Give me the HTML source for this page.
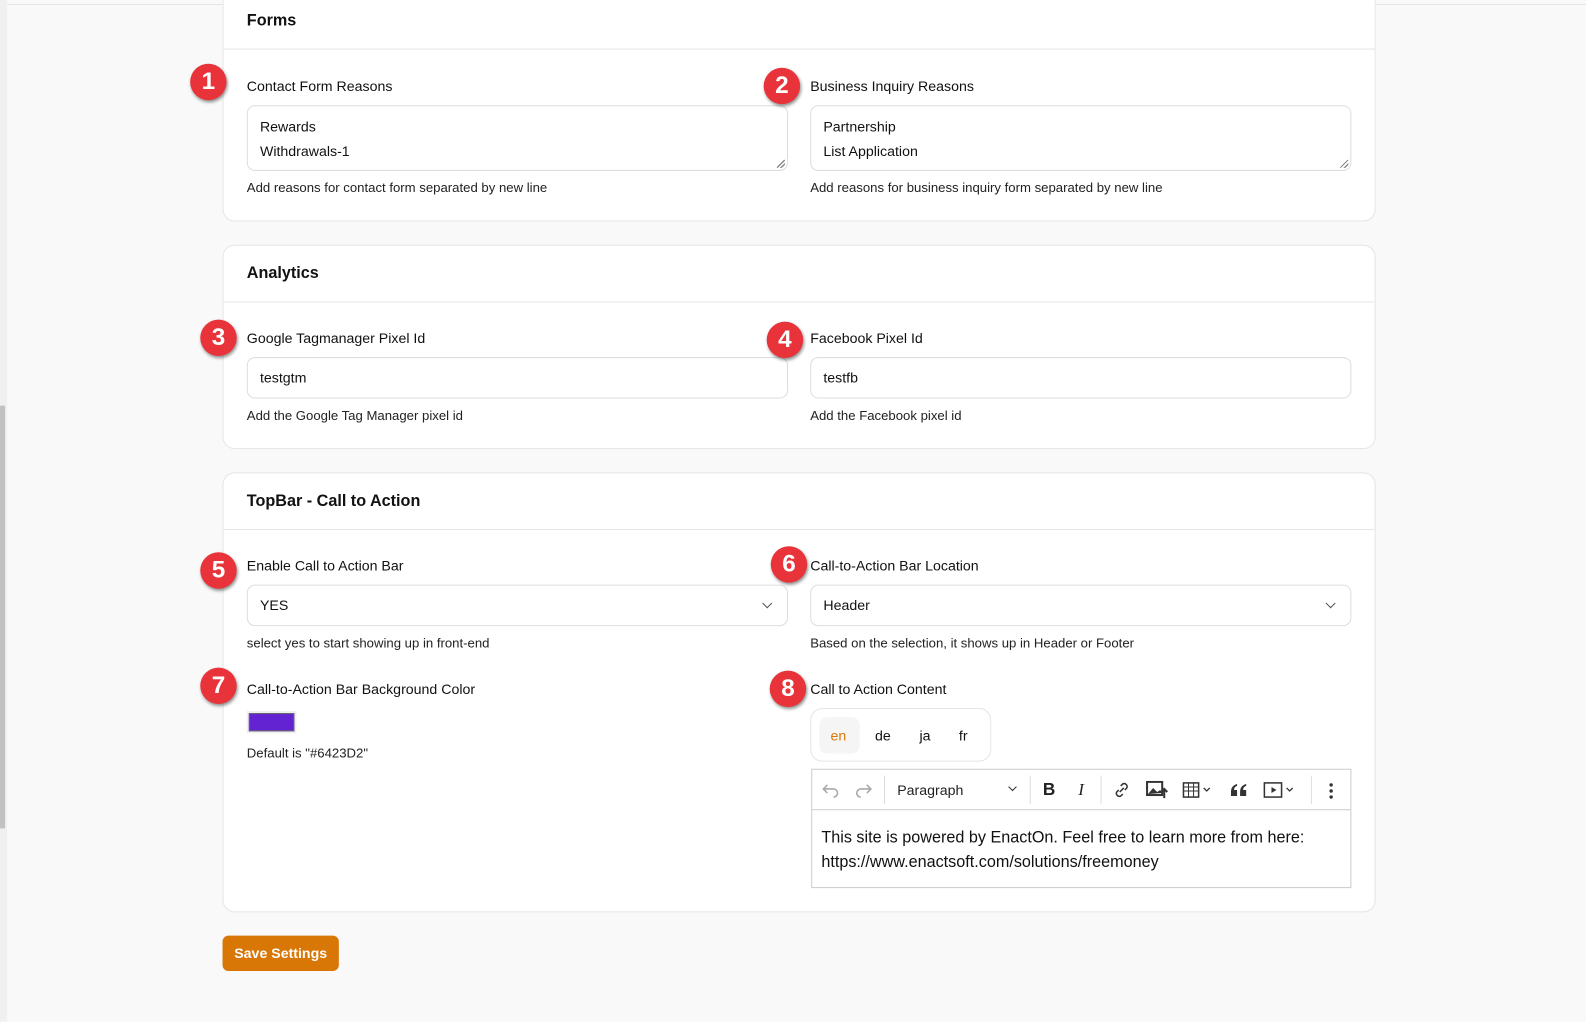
<!DOCTYPE html>
<html><head><meta charset="utf-8"><style>
*{box-sizing:border-box;margin:0;padding:0}
body{width:1586px;height:1020px;background:#f9f9f9;font-family:"Liberation Sans",sans-serif;color:#111;position:relative;overflow:hidden}
#w{position:absolute;left:0;top:0;width:1568px;height:1008px;transform:scale(1.0115);transform-origin:0 0}
.abs{position:absolute}
.sb{left:0;top:0;width:7px;height:1010px;background:#f0f0f0}
.thumb{left:0;top:401px;width:5px;height:418px;background:#c1c1c1}
.card{position:absolute;left:220px;width:1140px;background:#fff;border:1px solid #e5e5e5;border-radius:12px}
.card h2{position:absolute;left:23px;font-size:16px;font-weight:bold;color:#111}
.div{position:absolute;left:0;right:0;height:1px;background:#e5e5e5}
.lbl{position:absolute;font-size:14px;color:#111}
.help{position:absolute;font-size:13px;color:#222}
.box{position:absolute;border:1px solid #ddd;border-radius:8px;background:#fff;font-size:14px;color:#111;padding-left:12px}
.badge{position:absolute;width:36px;height:36px;border-radius:50%;background:#e8333a;color:#fff;font-weight:bold;font-size:24px;text-align:center;line-height:36px;box-shadow:1px 2px 3px rgba(0,0,0,.45)}
.chev{position:absolute;right:16px;top:14px;width:7px;height:7px;border-right:1.6px solid #555;border-bottom:1.6px solid #555;transform:rotate(45deg)}
.rs{position:absolute;right:2px;bottom:2px;width:8px;height:8px;background:linear-gradient(135deg,transparent 45%,#888 45%,#888 55%,transparent 55%,transparent 70%,#888 70%,#888 80%,transparent 80%)}
</style></head><body><div id="w">
<div class="abs sb"></div><div class="abs thumb"></div>
<div class="abs" style="left:7px;top:4px;width:1579px;height:1px;background:#e5e5e5"></div>

<div class="card" style="top:-10px;height:229px;border-top:none">
<h2 style="top:22px">Forms</h2><div class="div" style="top:58px"></div></div>
<div class="card" style="top:242px;height:202px">
<h2 style="top:19px">Analytics</h2><div class="div" style="top:55px"></div></div>
<div class="card" style="top:467px;height:435px">
<h2 style="top:19px">TopBar - Call to Action</h2><div class="div" style="top:55px"></div></div>

<div class="lbl" style="left:244px;top:77px">Contact Form Reasons</div>
<div class="box" style="left:244px;top:104px;width:535px;height:65px;line-height:24px;padding-top:8px;overflow:hidden">Rewards<br>Withdrawals-1<br>Offer Not Tracked<div class="rs"></div></div>
<div class="help" style="left:244px;top:178px">Add reasons for contact form separated by new line</div>
<div class="lbl" style="left:801px;top:77px">Business Inquiry Reasons</div>
<div class="box" style="left:801px;top:104px;width:535px;height:65px;line-height:24px;padding-top:8px;overflow:hidden">Partnership<br>List Application<br>Other<div class="rs"></div></div>
<div class="help" style="left:801px;top:178px">Add reasons for business inquiry form separated by new line</div>

<div class="lbl" style="left:244px;top:326px">Google Tagmanager Pixel Id</div>
<div class="box" style="left:244px;top:353px;width:535px;height:41px;line-height:39px">testgtm</div>
<div class="help" style="left:244px;top:403px">Add the Google Tag Manager pixel id</div>
<div class="lbl" style="left:801px;top:326px">Facebook Pixel Id</div>
<div class="box" style="left:801px;top:353px;width:535px;height:41px;line-height:39px">testfb</div>
<div class="help" style="left:801px;top:403px">Add the Facebook pixel id</div>

<div class="lbl" style="left:244px;top:551px">Enable Call to Action Bar</div>
<div class="box" style="left:244px;top:578px;width:535px;height:41px;line-height:39px">YES<div class="chev"></div></div>
<div class="help" style="left:244px;top:628px">select yes to start showing up in front-end</div>
<div class="lbl" style="left:801px;top:551px">Call-to-Action Bar Location</div>
<div class="box" style="left:801px;top:578px;width:535px;height:41px;line-height:39px">Header<div class="chev"></div></div>
<div class="help" style="left:801px;top:628px">Based on the selection, it shows up in Header or Footer</div>

<div class="lbl" style="left:244px;top:673px">Call-to-Action Bar Background Color</div>
<div class="abs" style="left:244px;top:703px;width:49px;height:22px;background:#efefef;padding:2px"><div style="width:100%;height:100%;background:#6423D2;border:1px solid #666"></div></div>
<div class="help" style="left:244px;top:737px">Default is "#6423D2"</div>

<div class="lbl" style="left:801px;top:673px">Call to Action Content</div>
<div class="abs" style="left:801px;top:700px;width:179px;height:53px;border:1px solid #e5e5e5;border-radius:12px;font-size:14px">
<div class="abs" style="left:8px;top:8px;width:40px;height:36px;background:#f5f5f5;border-radius:8px"></div>
<span class="abs" style="left:19px;top:18px;color:#d97706">en</span>
<span class="abs" style="left:63px;top:18px">de</span>
<span class="abs" style="left:107px;top:18px">ja</span>
<span class="abs" style="left:146px;top:18px">fr</span></div>

<div class="abs" style="left:802px;top:760px;width:534px;height:118px;border:1px solid #ccc;background:#fff">
<div class="abs" style="left:0;top:0;right:0;height:40px;border-bottom:1px solid #ccc;font-size:14px;color:#222">
<svg class="abs" style="left:9px;top:12px" width="20" height="16"><path d="M6 3L2 7l4 4M2 7h10a4 4 0 010 8" fill="none" stroke="#aaa" stroke-width="1.6"/></svg>
<svg class="abs" style="left:42px;top:12px" width="20" height="16"><path d="M12 3l4 4-4 4M16 7H6a4 4 0 000 8" fill="none" stroke="#aaa" stroke-width="1.6"/></svg>
<div class="abs" style="left:71px;top:6px;width:1px;height:28px;background:#ddd"></div>
<span class="abs" style="left:84px;top:12px">Paragraph</span>
<div class="abs" style="left:195px;top:14px;width:6px;height:6px;border-right:1.5px solid #333;border-bottom:1.5px solid #333;transform:rotate(45deg)"></div>
<div class="abs" style="left:215px;top:6px;width:1px;height:28px;background:#ddd"></div>
<span class="abs" style="left:228px;top:10px;font-weight:bold;font-size:17px">B</span>
<span class="abs" style="left:263px;top:10px;font-style:italic;font-size:17px;font-family:'Liberation Serif',serif">I</span>
<div class="abs" style="left:285px;top:6px;width:1px;height:28px;background:#ddd"></div>
<svg class="abs" style="left:297px;top:11px" width="18" height="18"><path d="M7 11l4-4M8 5l2-2a3 3 0 014 4l-2 2M10 13l-2 2a3 3 0 01-4-4l2-2" fill="none" stroke="#333" stroke-width="1.5"/></svg>
<svg class="abs" style="left:330px;top:11px" width="22" height="18"><rect x="1" y="1" width="15" height="13" fill="none" stroke="#333" stroke-width="2"/><path d="M2 13l5-6 4 4 3-2 2 3z" fill="#333"/><path d="M18 17V8M15 11l3-3 3 3" stroke="#333" stroke-width="2" fill="none"/></svg>
<svg class="abs" style="left:366px;top:12px" width="30" height="16"><rect x="1" y="1" width="15" height="14" fill="none" stroke="#333" stroke-width="1.5"/><path d="M1 5h15M1 9h15M6 1v14M11 1v14" stroke="#333"/><path d="M21 6l3 3 3-3" stroke="#333" fill="none" stroke-width="1.3"/></svg>
<svg class="abs" style="left:413px;top:13px" width="18" height="14"><path d="M1 13V8q0-5 6-7v2q-3 1-3 4h3v6zM10 13V8q0-5 6-7v2q-3 1-3 4h3v6z" fill="#333"/></svg>
<svg class="abs" style="left:446px;top:12px" width="30" height="16"><rect x="1" y="1" width="17" height="14" fill="none" stroke="#333" stroke-width="1.5"/><path d="M8 5v6l5-3z" fill="#333"/><path d="M23 6l3 3 3-3" stroke="#333" fill="none" stroke-width="1.3"/></svg>
<div class="abs" style="left:493px;top:6px;width:1px;height:28px;background:#ddd"></div>
<svg class="abs" style="left:510px;top:12px" width="6" height="18"><circle cx="3" cy="3" r="1.7" fill="#333"/><circle cx="3" cy="9" r="1.7" fill="#333"/><circle cx="3" cy="15" r="1.7" fill="#333"/></svg>
</div>
<div class="abs" style="left:9px;top:56px;font-size:16px;line-height:24px;color:#111">This site is powered by EnactOn. Feel free to learn more from here:<br>https://www.enactsoft.com/solutions/freemoney</div>
</div>

<div class="abs" style="left:220px;top:925px;width:115px;height:35px;background:#d97706;border-radius:6px;color:#fff;font-weight:bold;font-size:14px;text-align:center;line-height:35px">Save Settings</div>

<div class="badge" style="left:188px;top:63px">1</div>
<div class="badge" style="left:755px;top:67px">2</div>
<div class="badge" style="left:198px;top:316px">3</div>
<div class="badge" style="left:758px;top:318px">4</div>
<div class="badge" style="left:198px;top:546px">5</div>
<div class="badge" style="left:762px;top:540px">6</div>
<div class="badge" style="left:198px;top:660px">7</div>
<div class="badge" style="left:761px;top:663px">8</div>
</div></body></html>
